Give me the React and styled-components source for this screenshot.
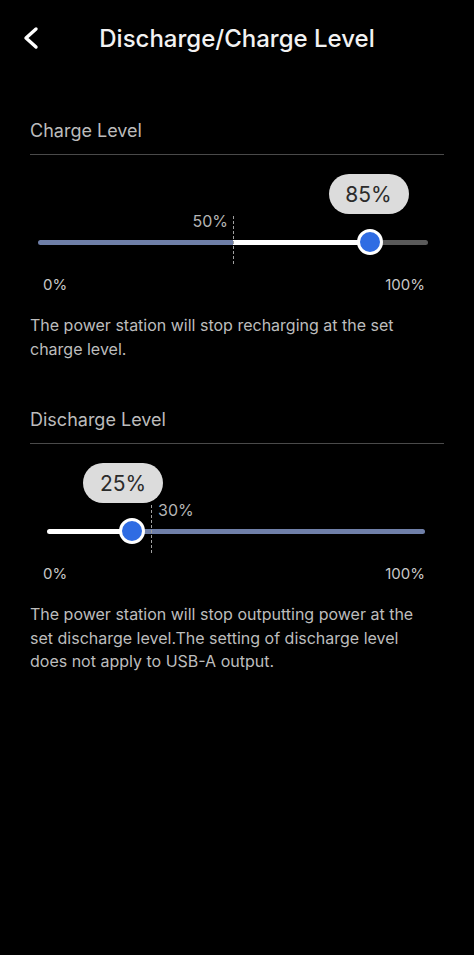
import React from "react";
import styled, { createGlobalStyle } from "styled-components";

const Global = createGlobalStyle`
  body {
    margin: 0;
    background: #000;
  }
`;

const Page = styled.div`
  min-height: 955px;
  background: #000;
  padding: 0 30px;
  box-sizing: border-box;
  font-family: Inter, "Noto Sans", sans-serif;
  color: #bdbdbd;
`;

const Header = styled.div`
  display: grid;
  grid-template-columns: 60px 1fr 60px;
  align-items: center;
  height: 76px;
  margin: 0 -30px;
`;

const Back = styled.button`
  border: none;
  background: none;
  padding: 0 0 0 22px;
  display: flex;
  align-items: center;
  cursor: pointer;
`;

const Title = styled.h1`
  margin: 0;
  font-size: 24px;
  font-weight: 500;
  color: #f2f2f2;
  text-align: center;
  white-space: nowrap;
`;

const Section = styled.section`
  padding-top: ${(p) => p.top}px;
`;

const SectionTitle = styled.h2`
  margin: 0;
  font-size: 18px;
  font-weight: 400;
  line-height: 24px;
  color: #bcbcbc;
  padding-bottom: 11px;
  border-bottom: 1px solid #4a4a4a;
`;

const SliderBox = styled.div`
  position: relative;
  height: 100px;
  margin-top: 19px;
`;

const Track = styled.div`
  position: absolute;
  top: 66px;
  height: 5px;
  display: flex;
  border-radius: 3px;
  overflow: hidden;
`;

const Segment = styled.div`
  height: 100%;
  background: ${(p) => p.color};
`;

const Marker = styled.div`
  position: absolute;
  top: 42px;
  height: 48px;
  border-left: 1.5px dashed #a0a0a0;
`;

const MarkerLabel = styled.span`
  position: absolute;
  top: 38px;
  font-size: 16px;
  color: #b5b5b5;
  line-height: 18px;
  white-space: nowrap;
  ${(p) => (p.side === "left" ? "transform: translateX(-100%); margin-left: -5px;" : "margin-left: 7px;")}
`;

const Thumb = styled.div`
  position: absolute;
  top: 55px;
  width: 20px;
  height: 20px;
  margin-left: -13px;
  border-radius: 50%;
  background: #2f6ce3;
  border: 3px solid #fff;
`;

const Bubble = styled.div`
  position: absolute;
  top: 0;
  width: 80px;
  height: 40px;
  transform: translateX(-50%);
  border-radius: 20px;
  background: #dcdcdc;
  color: #2b2b2b;
  font-size: 21px;
  display: flex;
  align-items: center;
  justify-content: center;
`;

const Scale = styled.div`
  display: flex;
  justify-content: space-between;
  padding: 0 19px 0 13px;
  margin-top: 1px;
  font-size: 15px;
  line-height: 20px;
  color: #c8c8c8;
`;

const Note = styled.p`
  margin: 19px 0 0;
  padding-right: 12px;
  font-size: 16px;
  line-height: 23.5px;
  color: #bdbdbd;
`;

const Chevron = () => (
  <svg width="18" height="24" viewBox="0 0 18 24">
    <path
      d="M14 3 L4 12 L14 21"
      fill="none"
      stroke="#fff"
      strokeWidth="3.4"
      strokeLinecap="round"
      strokeLinejoin="round"
    />
  </svg>
);

const LevelSlider = ({ slider }) => {
  const { origin, unit, track, segments, value, marker, bubbleShift, labelSide } = slider;
  const at = (v) => origin + unit * v;
  const trackLeft = track[0];
  const trackWidth = track[1] - track[0];

  return (
    <SliderBox>
      <Track style={{ left: trackLeft, width: trackWidth }}>
        {segments.map((s, i) => {
          const from = Math.max(at(s.from), trackLeft);
          const to = Math.min(at(s.to), track[1]);
          return <Segment key={i} color={s.color} style={{ width: to - from }} />;
        })}
      </Track>
      <Marker style={{ left: at(marker) }} />
      <MarkerLabel side={labelSide} style={{ left: at(marker) }}>
        {marker}%
      </MarkerLabel>
      <Thumb style={{ left: at(value) }} />
      <Bubble style={{ left: at(value) + bubbleShift }}>{value}%</Bubble>
    </SliderBox>
  );
};

const BLUE = "#6f7fa8";
const WHITE = "#ffffff";
const GREY = "#5a5a5a";

const sliders = [
  {
    key: "charge",
    title: "Charge Level",
    top: 43,
    origin: 8,
    unit: 3.9,
    track: [8, 398],
    value: 85,
    marker: 50,
    labelSide: "left",
    bubbleShift: -1,
    segments: [
      { from: 0, to: 50, color: BLUE },
      { from: 50, to: 85, color: WHITE },
      { from: 85, to: 100, color: GREY },
    ],
    note: "The power station will stop recharging at the set charge level.",
  },
  {
    key: "discharge",
    title: "Discharge Level",
    top: 47,
    origin: 7,
    unit: 3.8,
    track: [17, 395],
    value: 25,
    marker: 30,
    labelSide: "right",
    bubbleShift: -9,
    segments: [
      { from: -10, to: 25, color: WHITE },
      { from: 25, to: 110, color: BLUE },
    ],
    note: "The power station will stop outputting power at the set discharge level.The setting of discharge level does not apply to USB-A output.",
  },
];

export default function App() {
  return (
    <>
      <Global />
      <Page>
        <Header>
          <Back aria-label="Back">
            <Chevron />
          </Back>
          <Title>Discharge/Charge Level</Title>
          <span />
        </Header>
        {sliders.map((s) => (
          <Section key={s.key} top={s.top}>
            <SectionTitle>{s.title}</SectionTitle>
            <LevelSlider slider={s} />
            <Scale>
              <span>0%</span>
              <span>100%</span>
            </Scale>
            <Note>{s.note}</Note>
          </Section>
        ))}
      </Page>
    </>
  );
}
